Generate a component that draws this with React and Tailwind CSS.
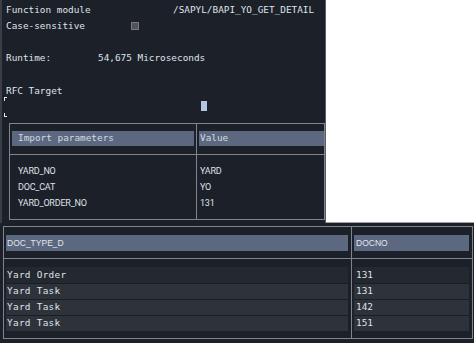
import React from "react";

const MONO = "font-['DejaVu_Sans_Mono',monospace] text-[9.4px]";
const SANS = "font-['Roboto',sans-serif] text-[9px] tracking-[-0.2px]";

const PARAMS = [
  ["YARD_NO", "YARD"],
  ["DOC_CAT", "YO"],
  ["YARD_ORDER_NO", "131"],
];

const DOCS = [
  ["Yard Order", "131"],
  ["Yard Task", "131"],
  ["Yard Task", "142"],
  ["Yard Task", "151"],
];

function Corner({ bottom }) {
  return (
    <div
      className={
        "h-[4px] w-[3px] border-l border-[#e6e8ea] " +
        (bottom ? "border-b" : "border-t")
      }
    />
  );
}

export default function App() {
  return (
    <div className="h-[343px] w-[474px] overflow-hidden bg-[#1c2028] text-[#dfe3e8]">
      <div className="flex h-[223px]">
        <div className="w-[326px] border-l-2 border-r border-l-[#3a3f47] border-r-[#5a5f66] bg-[#1c2028] pl-[4px]">
          <div className={`mt-[4px] flex h-[12px] items-center ${MONO}`}>
            <span className="w-[167px]">Function module</span>
            <span>/SAPYL/BAPI_YO_GET_DETAIL</span>
          </div>
          <div className={`mt-[4px] flex h-[12px] items-center ${MONO}`}>
            <span className="w-[125px]">Case-sensitive</span>
            <span className="h-[8px] w-[8px] border border-[#767a80] bg-[#50545a]" />
          </div>
          <div className={`mt-[20px] flex h-[12px] items-center ${MONO}`}>
            <span className="w-[92px]">Runtime:</span>
            <span>54,675 Microseconds</span>
          </div>
          <div className={`mt-[21px] flex h-[12px] items-center ${MONO}`}>
            RFC Target
          </div>
          <div className="flex h-[26px] items-start">
            <div className="-ml-[2px] flex flex-col pt-[0px]">
              <Corner />
              <div className="h-[12px]" />
              <Corner bottom />
            </div>
            <div className="ml-[194px] mt-[4px] h-[10px] w-[6px] bg-[#b3c5df]" />
          </div>
          <div className="ml-[3px] flex h-[97px] w-[316px] flex-col border border-[#80858c]">
            <div className="flex h-[31px] border-b border-[#80858c]">
              <div className="w-[187px] border-r border-[#80858c] pl-[2px] pr-[2px] pt-[7px]">
                <div className={`flex h-[15px] items-center bg-[#5c6880] pl-[6px] text-[#d3d9e2] ${MONO}`}>
                  Import parameters
                </div>
              </div>
              <div className="flex-1 pl-[2px] pt-[7px]">
                <div className={`flex h-[15px] items-center bg-[#5c6880] pl-[1px] text-[#d3d9e2] ${MONO}`}>
                  Value
                </div>
              </div>
            </div>
            <div className="flex flex-1">
              <div className={`w-[187px] border-r border-[#80858c] pl-[8px] pt-[8px] leading-[16px] ${SANS}`}>
                {PARAMS.map(([name]) => (
                  <div key={name}>{name}</div>
                ))}
              </div>
              <div className={`flex-1 pl-[3px] pt-[8px] leading-[16px] ${SANS}`}>
                {PARAMS.map(([name, value]) => (
                  <div key={name}>{value}</div>
                ))}
              </div>
            </div>
          </div>
        </div>
        <div className="flex-1 border-b border-[#9aa0a6] bg-white" />
      </div>

      <div className="pl-[3px] pt-[3px]">
        <div className="flex h-[113px] w-[470px] flex-col border border-[#80858c]">
          <div className="flex h-[32px] border-b border-[#80858c]">
            <div className="w-[348px] border-r border-[#80858c] pl-[2px] pr-[3px] pt-[8px]">
              <div className="flex h-[16px] items-center bg-[#5c6880] pl-[1px] font-['Liberation_Sans',sans-serif] text-[8.5px] text-[#e2e6ec]">
                DOC_TYPE_D
              </div>
            </div>
            <div className="flex-1 pl-[2px] pr-[3px] pt-[8px]">
              <div className="flex h-[16px] items-center bg-[#5c6880] pl-[2px] font-['Liberation_Sans',sans-serif] text-[8.5px] text-[#e2e6ec]">
                DOCNO
              </div>
            </div>
          </div>
          <div className="flex flex-1">
            <div className="w-[348px] border-r border-[#80858c] pl-[2px] pr-[3px] pt-[8px]">
              {DOCS.map(([type], i) => (
                <div
                  key={i}
                  className={
                    "flex h-[16px] items-center pl-[1px] tracking-[0.3px] " +
                    MONO +
                    (i === 0 ? " bg-[#24282f]" : " border-t border-[#1a1d22] bg-[#2e333b]")
                  }
                >
                  {type}
                </div>
              ))}
            </div>
            <div className="flex-1 pl-[2px] pr-[3px] pt-[8px]">
              {DOCS.map(([, no], i) => (
                <div
                  key={i}
                  className={
                    "flex h-[16px] items-center pl-[2px] " +
                    MONO +
                    (i === 0 ? " bg-[#24282f]" : " border-t border-[#1a1d22] bg-[#2e333b]")
                  }
                >
                  {no}
                </div>
              ))}
            </div>
          </div>
        </div>
      </div>
    </div>
  );
}
